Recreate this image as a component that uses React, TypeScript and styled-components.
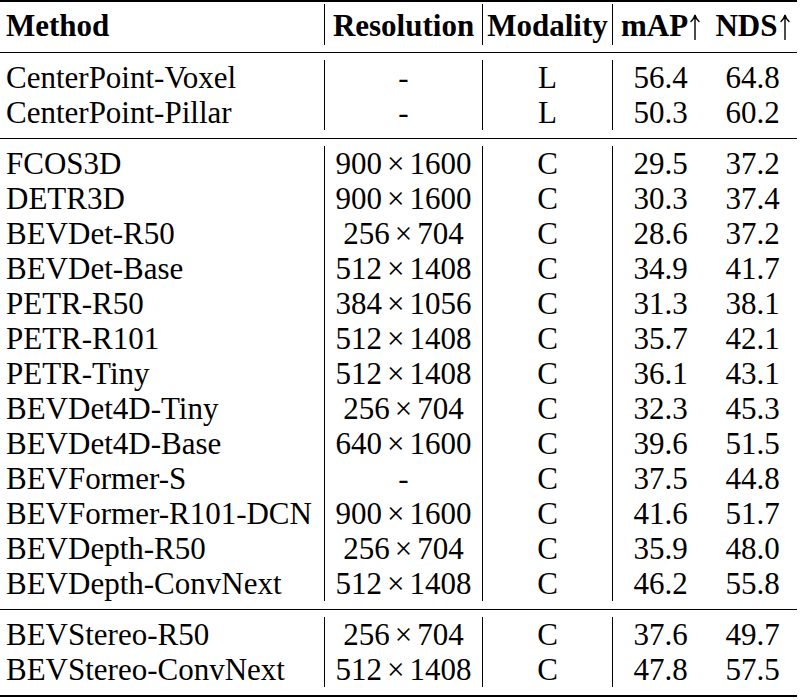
import styled, { createGlobalStyle } from "styled-components";

const GlobalStyle = createGlobalStyle`
  body {
    margin: 0;
    background: #fff;
  }
`;

const COLUMNS = "324px 158px 130px 96px 89px";

const Table = styled.div`
  width: 797px;
  font-family: "Liberation Serif", "Times New Roman", serif;
  font-size: 31px;
  color: #000;
`;

const Rule = styled.div<{ $heavy?: boolean }>`
  height: ${(p) => (p.$heavy ? 2 : 1)}px;
  background: #000;
`;

const Head = styled.div`
  padding: 2px 0 7px;
`;

const Group = styled.div`
  padding: 7px 0 8px;
`;

const Row = styled.div`
  display: grid;
  grid-template-columns: ${COLUMNS};
`;

const Cell = styled.div<{ $left?: boolean; $divider?: boolean }>`
  height: 35px;
  line-height: 35px;
  white-space: nowrap;
  text-align: ${(p) => (p.$left ? "left" : "center")};
  padding-left: ${(p) => (p.$left ? "6px" : "0")};
  border-left: ${(p) => (p.$divider ? "1px solid #000" : "none")};
`;

const HeadCell = styled(Cell)`
  font-weight: bold;
  height: 38px;
  line-height: 38px;
  padding-top: 3px;
`;

const Times = styled.span`
  margin: 0 5px;
`;

const Arrow = styled.svg`
  width: 10px;
  height: 26px;
  margin-left: 2px;
  vertical-align: -4px;
`;

// math-style \uparrow, thin stroke like the typeset original
function UpArrow() {
  return (
    <Arrow viewBox="0 0 10 26" aria-label="↑">
      <path
        d="M5 25.5V1.5M1 7.5Q4 5 5 1Q6 5 9 7.5"
        fill="none"
        stroke="#000"
        strokeWidth="1.4"
        strokeLinecap="round"
      />
    </Arrow>
  );
}

type Entry = [string, string, string, string, string];

const groups: Entry[][] = [
  [
    ["CenterPoint-Voxel", "-", "L", "56.4", "64.8"],
    ["CenterPoint-Pillar", "-", "L", "50.3", "60.2"],
  ],
  [
    ["FCOS3D", "900x1600", "C", "29.5", "37.2"],
    ["DETR3D", "900x1600", "C", "30.3", "37.4"],
    ["BEVDet-R50", "256x704", "C", "28.6", "37.2"],
    ["BEVDet-Base", "512x1408", "C", "34.9", "41.7"],
    ["PETR-R50", "384x1056", "C", "31.3", "38.1"],
    ["PETR-R101", "512x1408", "C", "35.7", "42.1"],
    ["PETR-Tiny", "512x1408", "C", "36.1", "43.1"],
    ["BEVDet4D-Tiny", "256x704", "C", "32.3", "45.3"],
    ["BEVDet4D-Base", "640x1600", "C", "39.6", "51.5"],
    ["BEVFormer-S", "-", "C", "37.5", "44.8"],
    ["BEVFormer-R101-DCN", "900x1600", "C", "41.6", "51.7"],
    ["BEVDepth-R50", "256x704", "C", "35.9", "48.0"],
    ["BEVDepth-ConvNext", "512x1408", "C", "46.2", "55.8"],
  ],
  [
    ["BEVStereo-R50", "256x704", "C", "37.6", "49.7"],
    ["BEVStereo-ConvNext", "512x1408", "C", "47.8", "57.5"],
  ],
];

function Resolution({ value }: { value: string }) {
  const parts = value.split("x");
  if (parts.length < 2) return <>{value}</>;
  return (
    <>
      {parts[0]}
      <Times>×</Times>
      {parts[1]}
    </>
  );
}

export default function App() {
  return (
    <>
      <GlobalStyle />
      <Table>
        <Rule $heavy />
        <Head>
          <Row>
            <HeadCell $left>Method</HeadCell>
            <HeadCell $divider>Resolution</HeadCell>
            <HeadCell $divider>Modality</HeadCell>
            <HeadCell $divider>
              mAP
              <UpArrow />
            </HeadCell>
            <HeadCell>
              NDS
              <UpArrow />
            </HeadCell>
          </Row>
        </Head>
        {groups.map((rows, gi) => (
          <div key={gi}>
            <Rule />
            <Group>
              {rows.map(([method, res, mod, map, nds]) => (
                <Row key={method}>
                  <Cell $left>{method}</Cell>
                  <Cell $divider>
                    <Resolution value={res} />
                  </Cell>
                  <Cell $divider>{mod}</Cell>
                  <Cell $divider>{map}</Cell>
                  <Cell>{nds}</Cell>
                </Row>
              ))}
            </Group>
          </div>
        ))}
        <Rule $heavy />
      </Table>
    </>
  );
}
